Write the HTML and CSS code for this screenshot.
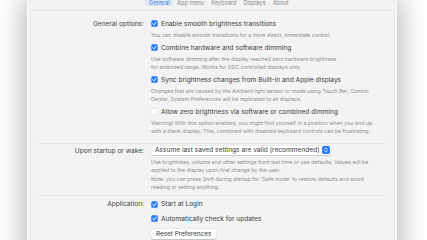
FILE: index.html
```
<!DOCTYPE html>
<html>
<head>
<meta charset="utf-8">
<link rel="stylesheet" href="styles.css">
</head>
<body>
<div class="window">
  <div class="tabs">
    <span class="tab active">General</span>
    <span class="tab">App menu</span>
    <span class="tab">Keyboard</span>
    <span class="tab">Displays</span>
    <span class="tab">About</span>
  </div>
  <div class="box">
    <div class="section first">
      <div class="label">General options:</div>
      <div class="controls">
        <div class="row"><svg class="cb" viewBox="0 0 14 14"><rect x="0.5" y="0.5" width="13" height="13" rx="3" fill="#2f7bf5"/><path d="M3.5 7.3 L6 9.8 L10.6 4" fill="none" stroke="#fff" stroke-width="1.9" stroke-linecap="round" stroke-linejoin="round"/></svg><span>Enable smooth brightness transitions</span></div>
        <p class="desc">You can disable smooth transitions for a more direct, immediate control.</p>
        <div class="row"><svg class="cb" viewBox="0 0 14 14"><rect x="0.5" y="0.5" width="13" height="13" rx="3" fill="#2f7bf5"/><path d="M3.5 7.3 L6 9.8 L10.6 4" fill="none" stroke="#fff" stroke-width="1.9" stroke-linecap="round" stroke-linejoin="round"/></svg><span>Combine hardware and software dimming</span></div>
        <p class="desc">Use software dimming after the display reached zero hardware brightness<br>for extended range. Works for DDC controlled displays only.</p>
        <div class="row"><svg class="cb" viewBox="0 0 14 14"><rect x="0.5" y="0.5" width="13" height="13" rx="3" fill="#2f7bf5"/><path d="M3.5 7.3 L6 9.8 L10.6 4" fill="none" stroke="#fff" stroke-width="1.9" stroke-linecap="round" stroke-linejoin="round"/></svg><span>Sync brightness changes from Built-in and Apple displays</span></div>
        <p class="desc">Changes that are caused by the Ambient light sensor or made using Touch Bar, Control<br>Center, System Preferences will be replicated to all displays.</p>
        <div class="row"><svg class="cb" viewBox="0 0 14 14"><rect x="0.75" y="0.75" width="12.5" height="12.5" rx="3" fill="#fff" stroke="#e2e2e2" stroke-width="0.8"/></svg><span>Allow zero brightness via software or combined dimming</span></div>
        <p class="desc">Warning! With this option enabled, you might find yourself in a position when you end up<br>with a blank display. This, combined with disabled keyboard controls can be frustrating.</p>
      </div>
    </div>
    <div class="section mid">
      <div class="label">Upon startup or wake:</div>
      <div class="controls">
        <div class="popup"><span>Assume last saved settings are valid (recommended)</span><svg class="stepper" viewBox="0 0 16 16"><rect x="0" y="0" width="16" height="16" rx="3.5" fill="#2f7bf5"/><path d="M5.2 6.4 L8 3.8 L10.8 6.4 M5.2 9.6 L8 12.2 L10.8 9.6" fill="none" stroke="#fff" stroke-width="1.5" stroke-linecap="round" stroke-linejoin="round"/></svg></div>
        <p class="desc gap">Use brightness, volume and other settings from last time or use defaults. Values will be<br>applied to the display upon first change by the user.</p>
        <p class="desc note">Note: you can press Shift during startup for 'Safe mode' to restore defaults and avoid<br>reading or setting anything.</p>
      </div>
    </div>
    <div class="section last">
      <div class="label">Application:</div>
      <div class="controls">
        <div class="row"><svg class="cb" viewBox="0 0 14 14"><rect x="0.5" y="0.5" width="13" height="13" rx="3" fill="#2f7bf5"/><path d="M3.5 7.3 L6 9.8 L10.6 4" fill="none" stroke="#fff" stroke-width="1.9" stroke-linecap="round" stroke-linejoin="round"/></svg><span>Start at Login</span></div>
        <div class="row r2"><svg class="cb" viewBox="0 0 14 14"><rect x="0.5" y="0.5" width="13" height="13" rx="3" fill="#2f7bf5"/><path d="M3.5 7.3 L6 9.8 L10.6 4" fill="none" stroke="#fff" stroke-width="1.9" stroke-linecap="round" stroke-linejoin="round"/></svg><span>Automatically check for updates</span></div>
        <div class="button">Reset Preferences</div>
      </div>
    </div>
  </div>
</div>
</body>
</html>
```

FILE: styles.css
```
html, body {
  margin: 0;
  padding: 0;
  height: 240px;
  overflow: hidden;
  background: #ffffff;
}
body {
  font-family: Inter, "Noto Sans", sans-serif;
  color: #3a3a3a;
}
.window {
  margin: 0 0 0 27px;
  width: 370px;
  height: 260px;
  background: #f3f3f3;
  border-left: 1px solid #fafafa;
  border-right: 1px solid #fafafa;
  box-sizing: border-box;
  box-shadow: 0 0 26px 4px rgba(0, 0, 0, 0.28);
  padding: 0 1px 0 2px;
}
.tabs {
  height: 10px;
  display: flex;
  justify-content: center;
  align-items: flex-start;
  padding-left: 12px;
  box-sizing: border-box;
}
.tab {
  font-size: 5.6px;
  line-height: 6px;
  color: #8a8a8a;
  padding: 0 3px;
  margin: 0 0.5px;
  border-radius: 0 0 2px 2px;
}
.tab.active {
  color: #4a86d8;
  background: #dfe8f5;
  padding: 0 3.5px;
}
.box {
  background: #f3f3f3;
  border-top: 1px solid #e3e3e3;
  border-left: 1px solid #e6e6e6;
  border-right: 1px solid #e6e6e6;
  box-shadow: inset 0 1px 0 #fbfbfb;
  padding: 0 8px;
}
.section {
  display: grid;
  grid-template-columns: 105px 1fr;
  column-gap: 7px;
  border-bottom: 1px solid #e4e4e4;
  padding: 2px 0 4px;
}
.section.first {
  padding-top: 7.5px;
  padding-bottom: 4.5px;
}
.section.mid {
  padding-top: 1.5px;
}
.section.last {
  border-bottom: none;
  padding-top: 3.5px;
}
.label {
  font-size: 6.6px;
  line-height: 10px;
  text-align: right;
  color: #444;
  white-space: nowrap;
}
.controls {
  display: flex;
  flex-direction: column;
  align-items: flex-start;
}
.row {
  display: flex;
  align-items: center;
  gap: 3px;
  height: 10px;
  font-size: 6.6px;
  color: #3a3a3a;
  white-space: nowrap;
}
.row.r2 {
  margin-top: 4.5px;
}
.cb {
  width: 7px;
  height: 7px;
  flex: none;
  filter: drop-shadow(0 0.3px 0.3px rgba(0,0,0,0.12));
}
.desc {
  margin: 2px 0 4px;
  font-size: 5.3px;
  line-height: 8px;
  color: #909090;
  white-space: nowrap;
}
.desc.gap {
  margin-top: 3px;
  margin-bottom: 1px;
}
.desc.note {
  margin-top: 0;
  margin-bottom: 0;
}
.popup {
  display: flex;
  align-items: center;
  gap: 2px;
  height: 9px;
  padding: 0 1px 0 4px;
  background: #ffffff;
  border-radius: 2px;
  box-shadow: 0 0.5px 1px rgba(0,0,0,0.15), 0 0 0 0.5px rgba(0,0,0,0.05);
  font-size: 6.6px;
  color: #3a3a3a;
  white-space: nowrap;
}
.stepper {
  width: 8px;
  height: 8px;
  flex: none;
}
.button {
  margin-top: 5.5px;
  height: 10px;
  line-height: 10px;
  padding: 0 5px;
  background: #ffffff;
  border-radius: 2px;
  box-shadow: 0 0.5px 1px rgba(0,0,0,0.18), 0 0 0 0.5px rgba(0,0,0,0.06);
  font-size: 6.4px;
  color: #3a3a3a;
}
```
